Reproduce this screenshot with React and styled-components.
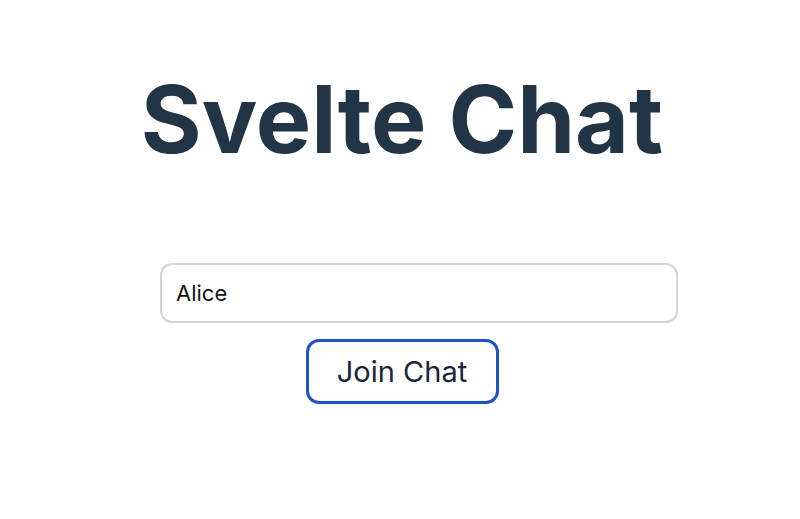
import React from 'react';
import styled, { createGlobalStyle } from 'styled-components';

const GlobalStyle = createGlobalStyle`
  body {
    margin: 0;
    background: #ffffff;
    font-family: Inter, "Liberation Sans", sans-serif;
  }
`;

const Page = styled.main`
  display: flex;
  flex-direction: column;
  align-items: center;
  padding: 63px 0 0 4px;
`;

const Title = styled.h1`
  margin: 0;
  font-family: Inter, sans-serif;
  font-size: 93px;
  font-weight: 700;
  line-height: 113px;
  color: #213547;
`;

const Form = styled.form`
  width: 480px;
  margin-top: 87px;
  display: flex;
  flex-direction: column;
  align-items: center;
  gap: 16px;
`;

const NameInput = styled.input`
  box-sizing: content-box;
  align-self: flex-start;
  margin-left: -2px;
  width: 100%;
  height: 56px;
  padding: 0 20px 0 14px;
  border: 2px solid #d4d4d4;
  border-radius: 12px;
  font-family: Inter, sans-serif;
  font-size: 22px;
  color: #111111;
  background: #ffffff;
  outline: none;
`;

const JoinButton = styled.button`
  box-sizing: border-box;
  width: 193px;
  height: 65px;
  border: 3px solid #1d52c8;
  border-radius: 13px;
  background: #ffffff;
  font-family: Inter, sans-serif;
  font-size: 29px;
  font-weight: 400;
  color: #1a2536;
  cursor: pointer;
`;

export default function App() {
  return (
    <>
      <GlobalStyle />
      <Page>
        <Title>Svelte Chat</Title>
        <Form onSubmit={(e) => e.preventDefault()}>
          <NameInput type="text" defaultValue="Alice" />
          <JoinButton type="submit">Join Chat</JoinButton>
        </Form>
      </Page>
    </>
  );
}
